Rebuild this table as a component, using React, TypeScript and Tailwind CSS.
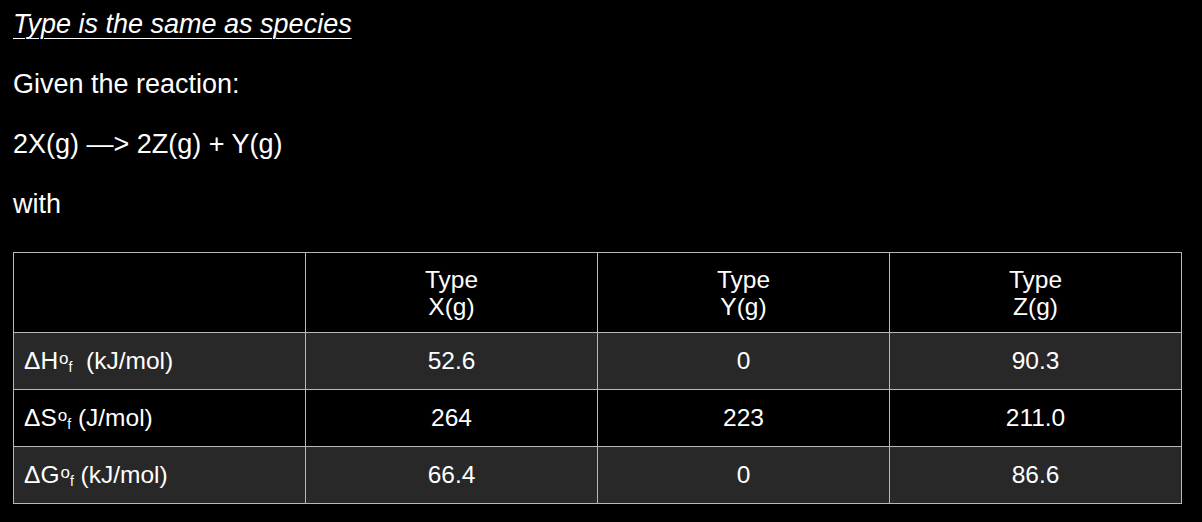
import React from 'react';

type Row = {
  symbol: string;
  unit: string;
  values: string[];
  shaded: boolean;
};

const rows: Row[] = [
  { symbol: 'H', unit: '\u00a0(kJ/mol)', values: ['52.6', '0', '90.3'], shaded: true },
  { symbol: 'S', unit: '(J/mol)', values: ['264', '223', '211.0'], shaded: false },
  { symbol: 'G', unit: '(kJ/mol)', values: ['66.4', '0', '86.6'], shaded: true },
];

const species = ['X(g)', 'Y(g)', 'Z(g)'];

const App: React.FC = () => {
  return (
    <div
      className="min-h-screen bg-black text-white px-[13px] pt-[6px]"
      style={{ fontFamily: '"Liberation Sans", Arial, sans-serif' }}
    >
      {/* Intro text */}
      <div className="text-[27px] leading-[36px] space-y-[24px]">
        <p className="italic underline underline-offset-[5px] decoration-1">Type is the same as species</p>
        <p>Given the reaction:</p>
        <p>2X(g) —&gt; 2Z(g) + Y(g)</p>
        <p>with</p>
      </div>

      {/* Data table */}
      <table className="mt-[30px] w-[1169px] table-fixed border-collapse border border-[#b8b8b8] text-[24.5px]">
        <thead>
          <tr className="h-[80px]">
            <th className="border border-[#b8b8b8] font-normal" />
            {species.map((s) => (
              <th key={s} className="border border-[#b8b8b8] font-normal leading-[27px] text-center">
                <div>Type</div>
                <div>{s}</div>
              </th>
            ))}
          </tr>
        </thead>
        <tbody>
          {rows.map((row) => (
            <tr key={row.symbol} className={`h-[57px] ${row.shaded ? 'bg-[#282828]' : 'bg-black'}`}>
              <td className="border border-[#b8b8b8] pl-[10px] whitespace-nowrap">
                Δ{row.symbol}
                <span className="relative -top-[5px] text-[17px] ml-[1px]">o</span>
                <span className="relative top-[3px] text-[14px]">f</span> {row.unit}
              </td>
              {row.values.map((v, i) => (
                <td key={i} className="border border-[#b8b8b8] text-center">
                  {v}
                </td>
              ))}
            </tr>
          ))}
        </tbody>
      </table>
    </div>
  );
};

export default App;
